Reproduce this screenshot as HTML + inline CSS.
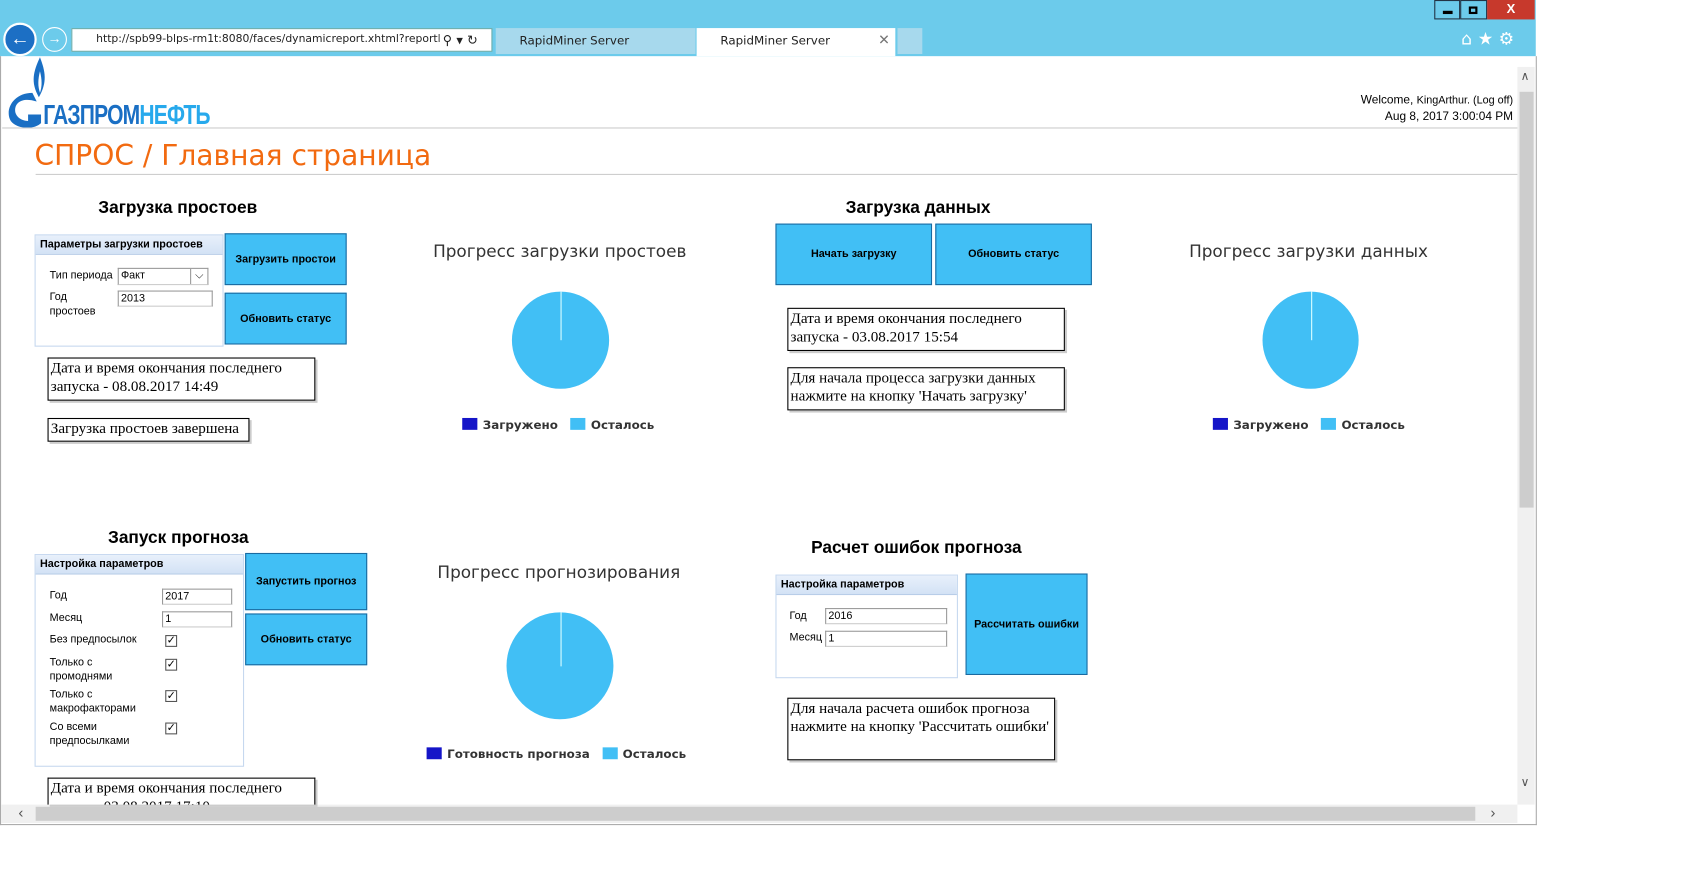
<!DOCTYPE html>
<html><head><meta charset="utf-8"><style>
*{box-sizing:border-box;margin:0;padding:0}
body{width:1693px;height:886px;overflow:hidden;background:#fff;font-family:"Liberation Sans",sans-serif}
#w{position:absolute;left:0;top:0;width:1568px;height:821px;transform:scale(1.08);transform-origin:0 0}
.a{position:absolute}
.btn{position:absolute;background:#41bff5;border:1px solid #1a6aa0;font:bold 10px "Liberation Sans",sans-serif;color:#000;display:flex;align-items:center;justify-content:center;text-align:center}
.h{position:absolute;font:bold 16px "Liberation Sans",sans-serif;color:#000}
.ch{position:absolute;font:15.6px "DejaVu Sans",sans-serif;color:#333;white-space:nowrap}
.box{position:absolute;border:1px solid #000;box-shadow:2px 2px 0 #ccc;font:14px "Liberation Serif",serif;padding:1px 2px;line-height:17px;background:#fff}
.pan{position:absolute;border:1px solid #c6d8ef;background:#fff}
.pt{background:linear-gradient(#e8f0fb,#d3e2f5);font:bold 10px "Liberation Sans",sans-serif;padding:3px 4px;border-bottom:1px solid #b8cde8;height:18px;white-space:nowrap}
.l{position:absolute;font:10px "Liberation Sans",sans-serif;line-height:13px;white-space:nowrap}
.in{position:absolute;border:1px solid #999;border-bottom-color:#ccc;height:15px;font:10px "Liberation Sans",sans-serif;padding-left:2px;line-height:13px;background:#fff}
.cb{position:absolute;width:11px;height:11px;border:1px solid #555;font:10px sans-serif;line-height:9px;text-align:center}
.pie{position:absolute;border-radius:50%;background:#41bff5}
.pie:after{content:"";position:absolute;left:50%;top:0;height:50%;width:1px;background:#dff}
.lg{position:absolute;font:bold 11px "DejaVu Sans",sans-serif;color:#333;white-space:nowrap}
.sq{display:inline-block;width:14px;height:11px;vertical-align:-1px;margin-right:5px}
.tab{position:absolute;top:26px;height:24px;font:11px "DejaVu Sans",sans-serif;line-height:24px;padding-left:22px;color:#222;white-space:nowrap}
</style></head><body><div id="w">
<div class="a" style="left:0;top:0;width:1422px;height:52px;background:#6ccbeb"></div>
<div class="a" style="left:1328px;top:0;width:24px;height:18px;border:1px solid #234;background:#6ccbeb"><div class="a" style="left:7px;top:9px;width:9px;height:3px;background:#000"></div></div>
<div class="a" style="left:1352px;top:0;width:25px;height:18px;border:1px solid #234;background:#6ccbeb"><div class="a" style="left:7px;top:5px;width:8px;height:7px;border:2px solid #000"></div></div>
<div class="a" style="left:1377px;top:0;width:44px;height:18px;background:#c7392c;color:#fff;font:bold 12px sans-serif;text-align:center;line-height:17px">X</div>
<div class="a" style="left:3px;top:21px;width:31px;height:31px;border-radius:50%;background:#1c6fc4;border:2px solid #fff;color:#fff;font:bold 18px sans-serif;text-align:center;line-height:25px">←</div>
<div class="a" style="left:39px;top:25px;width:23px;height:23px;border-radius:50%;border:1px solid #fff;color:#fff;font:13px sans-serif;text-align:center;line-height:20px">→</div>
<div class="a" style="left:66px;top:26px;width:390px;height:22px;background:#fff;border:1px solid #6aa;font:10px 'DejaVu Sans',sans-serif;line-height:20px;padding-left:22px;color:#222;white-space:nowrap;overflow:hidden"><span style="display:inline-block;width:318px;overflow:hidden">http://spb99-blps-rm1t:8080/faces/dynamicreport.xhtml?reportL</span><span style="position:absolute;left:343px;font-size:12px">⚲ ▾ ↻</span></div>
<div class="tab" style="left:459px;width:185px;background:#a7d9ed">RapidMiner Server</div>
<div class="tab" style="left:645px;width:184px;height:26px;background:#fff">RapidMiner Server<span style="position:absolute;right:5px;color:#777;font-size:13px">✕</span></div>
<div class="a" style="left:831px;top:26px;width:23px;height:24px;background:#a7d9ed"></div>
<div class="a" style="left:1353px;top:26px;color:#fff;font:16px 'DejaVu Sans',sans-serif;white-space:nowrap">⌂ ★ ⚙</div>
<div class="a" style="left:0;top:52px;width:1423px;height:712px;border:1px solid #aaa;border-top:none"></div>
<div class="a" style="left:1405px;top:62px;width:16px;height:683px;background:#f0f0f0"></div>
<div class="a" style="left:1407px;top:85px;width:13px;height:385px;background:#cdcdcd"></div>
<div class="a" style="left:1408px;top:64px;font:11px sans-serif;color:#555">∧</div>
<div class="a" style="left:1408px;top:718px;font:11px sans-serif;color:#555">∨</div>
<div class="a" style="left:1px;top:745px;width:1404px;height:17px;background:#f0f0f0"></div>
<div class="a" style="left:33px;top:747px;width:1333px;height:13px;background:#cdcdcd"></div>
<div class="a" style="left:17px;top:744px;font:14px sans-serif;color:#555">‹</div>
<div class="a" style="left:1380px;top:744px;font:14px sans-serif;color:#555">›</div>
<svg class="a" style="left:4px;top:52px" width="44" height="68"><path d="M33 1 C27 14 24 24 32 38 C40 24 38 14 33 1Z" fill="#1a6fc4"/><path d="M33 14 C31 22 31 28 33 34 C35 28 35 22 33 14Z" fill="#fff"/><path d="M26 34 C8 34 0 50 6 60 C12 68 28 68 34 62 L34 54 L22 54 L22 60 C16 60 10 56 10 50 C10 42 18 38 30 42Z" fill="#1a6fc4"/></svg>
<div class="a" style="left:40px;top:93px;font:bold 26px 'Liberation Sans',sans-serif;color:#1a6fc4;line-height:26px;transform:scaleX(.75);transform-origin:0 0;white-space:nowrap;letter-spacing:-1px">ГАЗПРОМ<span style="color:#27a9ec">НЕФТЬ</span></div>
<div class="a" style="right:167px;top:86px;font:11px 'Liberation Sans',sans-serif;text-align:right;line-height:14px;white-space:nowrap">Welcome, <span style="font-size:10px">KingArthur. (Log off)</span><br>Aug 8, 2017 3:00:04 PM</div>
<div class="a" style="left:2px;top:118px;width:1403px;height:1px;background:#ccc"></div>
<div class="a" style="left:32px;top:130px;font:26px 'DejaVu Sans',sans-serif;color:#f26a10;white-space:nowrap">СПРОС / Главная страница</div>
<div class="a" style="left:33px;top:161px;width:1372px;height:1px;background:#ccc"></div>

<div class="h" style="left:91px;top:184px">Загрузка простоев</div>
<div class="pan" style="left:32px;top:217px;width:175px;height:104px"><div class="pt">Параметры загрузки простоев</div></div>
<div class="l" style="left:46px;top:249px">Тип периода</div>
<div class="in" style="left:109px;top:248px;width:84px;height:16px">Факт<span style="position:absolute;right:0;top:0;width:16px;height:14px;border-left:1px solid #999;text-align:center">⌵</span></div>
<div class="l" style="left:46px;top:269px">Год<br>простоев</div>
<div class="in" style="left:109px;top:269px;width:88px">2013</div>
<div class="btn" style="left:208px;top:216px;width:113px;height:48px">Загрузить простои</div>
<div class="btn" style="left:208px;top:271px;width:113px;height:48px">Обновить статус</div>
<div class="box" style="left:44px;top:331px;width:248px;height:40px">Дата и время окончания последнего запуска - 08.08.2017 14:49</div>
<div class="box" style="left:44px;top:387px;width:187px;height:22px;white-space:nowrap">Загрузка простоев завершена</div>

<div class="ch" style="left:401px;top:224px">Прогресс загрузки простоев</div>
<div class="pie" style="left:474px;top:270px;width:90px;height:90px"></div>
<div class="lg" style="left:428px;top:387px"><span class="sq" style="background:#1515c8"></span>Загружено &nbsp;&nbsp;<span class="sq" style="background:#41bff5"></span>Осталось</div>

<div class="h" style="left:783px;top:184px">Загрузка данных</div>
<div class="btn" style="left:718px;top:207px;width:145px;height:57px">Начать загрузку</div>
<div class="btn" style="left:866px;top:207px;width:145px;height:57px">Обновить статус</div>
<div class="box" style="left:729px;top:285px;width:257px;height:40px">Дата и время окончания последнего запуска - 03.08.2017 15:54</div>
<div class="box" style="left:729px;top:340px;width:257px;height:40px">Для начала процесса загрузки данных нажмите на кнопку 'Начать загрузку'</div>

<div class="ch" style="left:1101px;top:224px">Прогресс загрузки данных</div>
<div class="pie" style="left:1169px;top:270px;width:89px;height:90px"></div>
<div class="lg" style="left:1123px;top:387px"><span class="sq" style="background:#1515c8"></span>Загружено &nbsp;&nbsp;<span class="sq" style="background:#41bff5"></span>Осталось</div>

<div class="h" style="left:100px;top:490px">Запуск прогноза</div>
<div class="pan" style="left:32px;top:513px;width:194px;height:197px"><div class="pt">Настройка параметров</div></div>
<div class="l" style="left:46px;top:545px">Год</div><div class="in" style="left:150px;top:545px;width:65px">2017</div>
<div class="l" style="left:46px;top:566px">Месяц</div><div class="in" style="left:150px;top:566px;width:65px">1</div>
<div class="l" style="left:46px;top:586px">Без предпосылок</div><div class="cb" style="left:153px;top:588px">✓</div>
<div class="l" style="left:46px;top:607px">Только с<br>промоднями</div><div class="cb" style="left:153px;top:610px">✓</div>
<div class="l" style="left:46px;top:637px">Только с<br>макрофакторами</div><div class="cb" style="left:153px;top:639px">✓</div>
<div class="l" style="left:46px;top:667px">Со всеми<br>предпосылками</div><div class="cb" style="left:153px;top:669px">✓</div>
<div class="btn" style="left:227px;top:512px;width:113px;height:53px">Запустить прогноз</div>
<div class="btn" style="left:227px;top:568px;width:113px;height:48px">Обновить статус</div>
<div class="box" style="left:44px;top:720px;width:248px;height:25px;overflow:hidden;border-bottom:none;white-space:nowrap">Дата и время окончания последнего<br>&nbsp;&nbsp;&nbsp;&nbsp;&nbsp;&nbsp;&nbsp;&nbsp;&nbsp;&nbsp;&nbsp;&nbsp;&nbsp;&nbsp;03.08.2017 17:10</div>

<div class="ch" style="left:405px;top:521px">Прогресс прогнозирования</div>
<div class="pie" style="left:469px;top:567px;width:99px;height:99px"></div>
<div class="lg" style="left:395px;top:692px"><span class="sq" style="background:#1515c8"></span>Готовность прогноза &nbsp;&nbsp;<span class="sq" style="background:#41bff5"></span>Осталось</div>

<div class="h" style="left:751px;top:499px">Расчет ошибок прогноза</div>
<div class="pan" style="left:718px;top:532px;width:169px;height:96px"><div class="pt">Настройка параметров</div></div>
<div class="l" style="left:731px;top:564px">Год</div><div class="in" style="left:764px;top:563px;width:113px">2016</div>
<div class="l" style="left:731px;top:584px">Месяц</div><div class="in" style="left:764px;top:584px;width:113px">1</div>
<div class="btn" style="left:894px;top:531px;width:113px;height:94px">Рассчитать ошибки</div>
<div class="box" style="left:729px;top:646px;width:248px;height:58px">Для начала расчета ошибок прогноза нажмите на кнопку 'Рассчитать ошибки'</div>
</div></body></html>
